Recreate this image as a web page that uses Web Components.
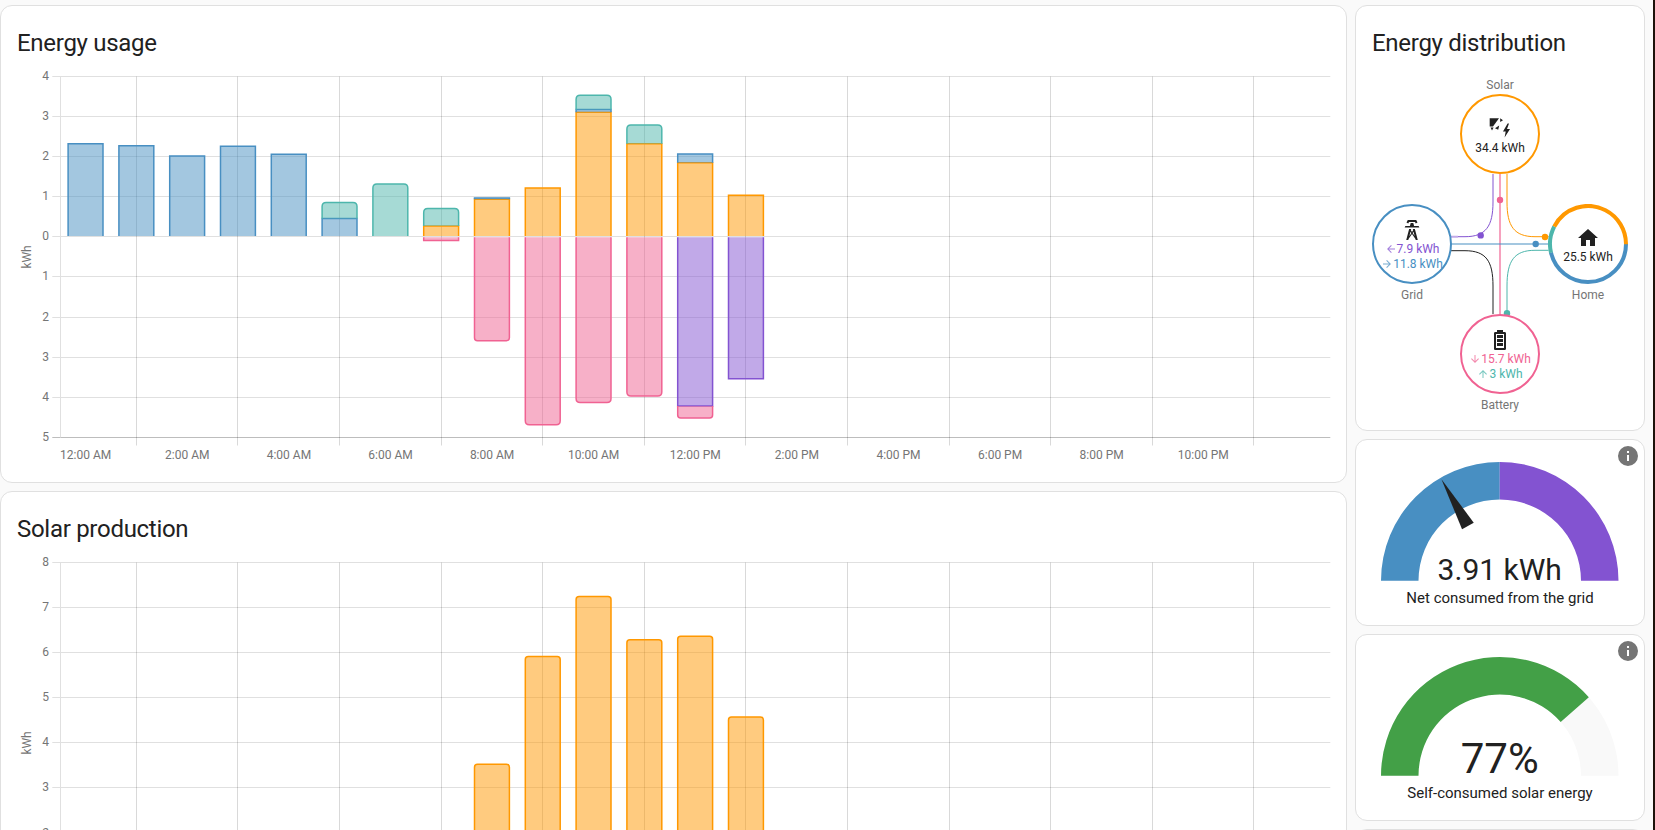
<!DOCTYPE html>
<html lang="en">
<head>
<meta charset="utf-8">
<title>Energy</title>
<style>
  html, body { margin: 0; height: 830px; overflow: hidden; background: #fafafa; }
  body { font-family: Roboto, "Liberation Sans", sans-serif; color: #212121; }
</style>
</head>
<body>
<energy-page>
  <energy-card slot="main" header="Energy usage" style="height:478px">
    <bar-chart id="usage"></bar-chart>
  </energy-card>
  <energy-card slot="main" header="Solar production" style="height:478px">
    <bar-chart id="solar"></bar-chart>
  </energy-card>

  <energy-card slot="side" header="Energy distribution" style="height:426px">
    <energy-distribution></energy-distribution>
  </energy-card>
  <energy-card slot="side" style="height:187px">
    <energy-gauge value="3.91 kWh" size="30" label="Net consumed from the grid" kind="net" text-y="-1"></energy-gauge>
  </energy-card>
  <energy-card slot="side" style="height:187px">
    <energy-gauge value="77%" size="42" label="Self-consumed solar energy" kind="ratio" ratio="0.77" text-y="-2.5"></energy-gauge>
  </energy-card>
  <energy-card slot="side" style="height:187px"></energy-card>
</energy-page>

<script>
const COLORS = {
  grid: '#488fc2',
  solar: '#ff9800',
  battery: '#4db6ac',
  toBattery: '#f06292',
  toGrid: '#8353d1',
};

const ICONS = {
  solar: `<path d="M1.7 2.2H11L5 10.5H1.7Z"/><path d="M12.2 2.3 15 4.2 12.2 6Z"/><path d="M2.5 11.6H5.6L4 14.6Z"/><path d="M7 12.3 11.2 9.5 10.2 13.7Z"/><path d="M19.6 7.6 15 15.6H17.7L16.6 21.6 22 13H19L21 7.6Z"/>`,
  grid: `<path d="M8.28,5.45L6.5,4.55L7.76,2H16.23L17.5,4.55L15.72,5.44L15,4H9L8.28,5.45M18.62,8H14.09L13.3,5H10.7L9.91,8H5.38L4.63,9.5H19.37L18.62,8M17.77,22H15.7L15.46,21.1L12,15.9L8.53,21.1L8.3,22H6.23L9.12,11H11.19L10.83,12.35L12,14.1L13.16,12.35L12.81,11H14.88L17.77,22M11.4,15L10.5,13.65L9.32,18.13L11.4,15M14.68,18.12L13.5,13.64L12.6,15L14.68,18.12Z"/>`,
  home: `<path d="M10,20V14H14V20H19V12H22L12,3L2,12H5V20H10Z"/>`,
  battery: `<path fill-rule="evenodd" d="M16.67,4H15V2H9V4H7.33A1.33,1.33 0 0,0 6,5.33V20.67C6,21.4 6.6,22 7.33,22H16.67A1.33,1.33 0 0,0 18,20.67V5.33C18,4.6 17.4,4 16.67,4M16,20H8V6H16Z"/><path d="M15,7H9V10H15ZM15,11H9V14H15ZM15,15H9V18H15Z"/>`,
  left: `<path d="M20,11V13H8L13.5,18.5L12.08,19.92L4.16,12L12.08,4.08L13.5,5.5L8,11H20Z"/>`,
  right: `<path d="M4,11V13H16L10.5,18.5L11.92,19.92L19.84,12L11.92,4.08L10.5,5.5L16,11H4Z"/>`,
  down: `<path d="M11,4H13V16L18.5,10.5L19.92,11.92L12,19.84L4.08,11.92L5.5,10.5L11,16V4Z"/>`,
  up: `<path d="M13,20H11V8L5.5,13.5L4.08,12.08L12,4.16L19.92,12.08L18.5,13.5L13,8V20Z"/>`,
  info: `<path d="M13,9H11V7H13M13,17H11V11H13M12,2A10,10 0 0,0 2,12A10,10 0 0,0 12,22A10,10 0 0,0 22,12A10,10 0 0,0 12,2Z"/>`,
};

class EnergyPage extends HTMLElement {
  constructor() {
    super();
    this.attachShadow({ mode: 'open' }).innerHTML = `
      <style>
        :host {
          display: grid;
          grid-template-columns: 1347px 290px;
          column-gap: 8px;
          align-items: start;
          box-sizing: border-box;
          width: 1655px;
          height: 830px;
          padding-top: 5px;
          border-right: 2px solid #1d120b;
          overflow: hidden;
        }
        .col { display: flex; flex-direction: column; gap: 8px; }
      </style>
      <div class="col"><slot name="main"></slot></div>
      <div class="col"><slot name="side"></slot></div>`;
  }
}

class EnergyCard extends HTMLElement {
  constructor() {
    super();
    const header = this.getAttribute('header');
    this.attachShadow({ mode: 'open' }).innerHTML = `
      <style>
        :host {
          display: block;
          position: relative;
          box-sizing: border-box;
          flex: none;
          background: #fff;
          border: 1px solid #e0e0e0;
          border-radius: 12px;
          overflow: hidden;
        }
        h1 {
          margin: 0;
          padding: 13px 16px 0;
          height: 47px;
          font: 400 24px/48px Roboto, "Liberation Sans", sans-serif;
          letter-spacing: -0.012em;
          color: #212121;
        }
      </style>
      ${header ? `<h1>${header}</h1>` : ''}
      <slot></slot>`;
  }
}

class BarChart extends HTMLElement {
  constructor() {
    super();
    this.attachShadow({ mode: 'open' });
  }

  // opts: { ticks, step, rows, visibleHeight }
  render(opts) {
    const x0 = 59.3;
    const band = 50.8;
    const top = 10.4;
    const count = 25;
    const barLeft = (i) => x0 + i * band + 7.8;
    const barWidth = 34.9;
    const crisp = (v) => Math.floor(v) + 0.5;
    const zeroY = crisp(top + opts.ticks.indexOf(0) * opts.step);
    const right = x0 + count * band;
    const bottom = crisp(top + (opts.ticks.length - 1) * opts.step);
    const visible = opts.visibleHeight || 416;

    let grid = '';
    opts.ticks.forEach((tick, i) => {
      const y = crisp(top + i * opts.step);
      const last = i === opts.ticks.length - 1;
      grid += `<path d="M${x0 - 8} ${y}H${right}" stroke="${last ? '#bdbdbd' : '#e0e0e0'}"/>`;
      if (y - 6 <= visible) {
        grid += `<text x="48" y="${y + 3.5}" text-anchor="end">${tick}</text>`;
      }
    });
    grid += `<path d="M${crisp(x0)} ${crisp(top)}V${bottom}" stroke="#e0e0e0"/>`;
    for (let i = 0; i < 12; i++) {
      const x = crisp(x0 - 0.2 + (1.5 + 2 * i) * band);
      grid += `<path d="M${x} ${crisp(top)}V${bottom + 8}" stroke="#000" stroke-opacity=".15"/>`;
    }
    if (bottom + 21 <= visible) {
      for (let i = 0; i < 12; i++) {
        const hour = i === 0 ? 12 : i * 2 > 12 ? i * 2 - 12 : i * 2;
        const suffix = i < 6 ? 'AM' : 'PM';
        const x = x0 + (2 * i + 0.5) * band;
        grid += `<text x="${x}" y="${bottom + 21}" text-anchor="middle">${hour}:00 ${suffix}</text>`;
      }
    }
    grid += `<text transform="translate(30 ${top + (bottom - top) / 2}) rotate(-90)" text-anchor="middle">kWh</text>`;

    const segment = (i, from, to, color, radius) => {
      const dir = to < from ? 1 : -1;
      const x = barLeft(i);
      const w = barWidth;
      const r = Math.min(radius, Math.abs(from - to));
      const d = r
        ? `M${x} ${from}V${to + dir * r}Q${x} ${to} ${x + r} ${to}H${x + w - r}Q${x + w} ${to} ${x + w} ${to + dir * r}V${from}`
        : `M${x} ${from}V${to}H${x + w}V${from}`;
      return `<path d="${d}Z" fill="${color}" fill-opacity=".5"/>`
        + `<path d="${d}" fill="none" stroke="${color}" stroke-width="1.5"/>`;
    };

    let bars = '';
    opts.rows.forEach((row, i) => {
      let up = zeroY;
      (row.up || []).forEach(([name, value, radius], n) => {
        const y = up - value * opts.step;
        bars += segment(i, n === 0 ? zeroY - 0.5 : up, y, COLORS[name], radius || 0);
        up = y;
      });
      let down = zeroY + 1.5;
      (row.down || []).forEach(([name, value, radius], n) => {
        const y = down + value * opts.step;
        bars += segment(i, n === 0 ? zeroY + 0.8 : down, y, COLORS[name], radius || 0);
        down = y;
      });
    });

    this.shadowRoot.innerHTML = `
      <style>
        :host { display: block; height: 416px; }
        svg { display: block; }
        text { font: 12px Roboto, "Liberation Sans", sans-serif; fill: #757575; }
      </style>
      <svg width="1345" height="416" viewBox="0 0 1345 416">${grid}${bars}</svg>`;
  }
}

class FlowValue extends HTMLElement {
  constructor() {
    super();
    const dir = this.getAttribute('dir-icon');
    const color = this.getAttribute('color') || '#212121';
    this.attachShadow({ mode: 'open' }).innerHTML = `
      <style>
        :host {
          display: flex;
          align-items: center;
          justify-content: center;
          height: 15px;
          font-size: 12px;
          line-height: 15px;
          white-space: nowrap;
          color: ${color};
        }
        svg { width: 12px; height: 12px; fill: currentColor; opacity: .75; flex: none; }
      </style>
      ${dir ? `<svg viewBox="0 0 24 24">${ICONS[dir]}</svg>` : ''}<slot></slot>`;
  }
}

class FlowNode extends HTMLElement {
  constructor() {
    super();
    const label = this.getAttribute('label');
    const icon = this.getAttribute('icon');
    const ring = this.getAttribute('ring') || '#212121';
    const below = this.hasAttribute('below');
    const home = this.hasAttribute('segments');
    const circumference = 2 * Math.PI * 38;
    // solar arc runs back over the top from 3 o'clock, grid runs forward, battery closes the ring
    const arc = (color, start, part) => `<circle cx="40" cy="40" r="38" fill="none" stroke="${color}" stroke-width="4"
      stroke-dasharray="${part * circumference} ${circumference}" transform="rotate(${start} 40 40)"/>`;
    const rings = home
      ? arc(COLORS.grid, 0, 0.463) + arc(COLORS.battery, 166.7, 0.113) + arc(COLORS.solar, 207.4, 0.424)
      : '';
    this.attachShadow({ mode: 'open' }).innerHTML = `
      <style>
        :host {
          display: flex;
          flex-direction: column;
          align-items: center;
          width: 80px;
          position: relative;
          z-index: 1;
        }
        .label { height: 16px; font-size: 12px; line-height: 16px; color: #757575; white-space: nowrap; }
        .label.top { margin-bottom: 1px; }
        .circle {
          box-sizing: border-box;
          position: relative;
          width: 80px;
          height: 80px;
          padding-top: ${home ? 2 : below ? 1 : 3}px;
          border-radius: 50%;
          border: ${home ? 0 : `2px solid ${ring}`};
          background: #fff;
          display: flex;
          flex-direction: column;
          align-items: center;
          justify-content: center;
        }
        .icon { width: 24px; height: 24px; fill: #212121; flex: none; }
        .ring { position: absolute; inset: 0; width: 80px; height: 80px; }
        .below { margin-top: 3px; }
      </style>
      ${below ? '' : `<div class="label top">${label}</div>`}
      <div class="circle">
        ${rings ? `<svg class="ring" viewBox="0 0 80 80">${rings}</svg>` : ''}
        <svg class="icon" viewBox="0 0 24 24">${ICONS[icon]}</svg>
        <slot></slot>
      </div>
      ${below ? `<div class="label below">${label}</div>` : ''}`;
  }
}

class EnergyDistribution extends HTMLElement {
  constructor() {
    super();
    const { grid, solar, battery, toBattery, toGrid } = COLORS;
    const straight = (d, color, opacity = 0.5) => `<path d="${d}" stroke="${color}" stroke-width="2" stroke-opacity="${opacity}"/>`;
    const curve = (d, color) => `<path d="${d}" stroke="${color}" stroke-width="1"/>`;
    const dot = (x, y, color) => `<circle cx="${x}" cy="${y}" r="3.2" fill="${color}"/>`;
    this.attachShadow({ mode: 'open' }).innerHTML = `
      <style>
        :host {
          display: block;
          position: relative;
          box-sizing: border-box;
          width: 256px;
          margin-left: 16px;
          padding-top: 11px;
        }
        .row { display: flex; justify-content: center; }
        .middle { justify-content: space-between; margin-top: 30px; }
        .bottom { margin-top: 11px; }
        svg.lines { position: absolute; left: 0; top: 0; width: 256px; height: 340px; fill: none; }
      </style>
      <svg class="lines" viewBox="0 0 256 340">
        ${straight('M128 108V248', toBattery, 0.6)}
        ${straight('M79 178H177', grid)}
        ${straight('M121 108V136', toGrid)}
        ${curve('M121 136C121 160 114 170.7 93 170.7H86', toGrid)}
        ${straight('M86 170.7H79', toGrid)}
        ${straight('M135 108V136', solar)}
        ${curve('M135 136C135 160 142 170.7 163 170.7H177', solar)}
        ${straight('M121 220V248', '#212121')}
        ${curve('M79 184.7H93C114 184.7 121 195 121 220', '#212121')}
        ${straight('M135 220V248', battery)}
        ${curve('M177 184.3H163C142 184.3 135 195 135 220', battery)}
        ${dot(128, 134, toBattery)}
        ${dot(108.7, 169.4, toGrid)}
        ${dot(173, 171, solar)}
        ${dot(163.7, 178, grid)}
        ${dot(135, 247.3, battery)}
      </svg>
      <div class="row">
        <flow-node label="Solar" icon="solar" ring="${solar}">
          <flow-value style="margin-top:1px">34.4 kWh</flow-value>
        </flow-node>
      </div>
      <div class="row middle">
        <flow-node label="Grid" icon="grid" ring="${grid}" below>
          <flow-value dir-icon="left" color="${toGrid}">7.9 kWh</flow-value>
          <flow-value dir-icon="right" color="${grid}">11.8 kWh</flow-value>
        </flow-node>
        <flow-node label="Home" icon="home" segments below>
          <flow-value>25.5 kWh</flow-value>
        </flow-node>
      </div>
      <div class="row bottom">
        <flow-node label="Battery" icon="battery" ring="${toBattery}" below>
          <flow-value dir-icon="down" color="${toBattery}">15.7 kWh</flow-value>
          <flow-value dir-icon="up" color="${battery}">3 kWh</flow-value>
        </flow-node>
      </div>`;
  }
}

class EnergyGauge extends HTMLElement {
  constructor() {
    super();
    const R = 118.75;
    const r = 81.25;
    const sector = (from, to, color) => {
      const pt = (rad, a) => `${-rad * Math.cos(a)} ${-rad * Math.sin(a)}`;
      const a0 = from * Math.PI;
      const a1 = to * Math.PI;
      return `<path fill="${color}" d="M${pt(R, a0)}A${R} ${R} 0 0 1 ${pt(R, a1)}L${pt(r, a1)}A${r} ${r} 0 0 0 ${pt(r, a0)}Z"/>`;
    };
    let arcs;
    if (this.getAttribute('kind') === 'net') {
      arcs = sector(0, 0.5, COLORS.grid) + sector(0.5, 1, COLORS.toGrid)
        + '<polygon points="-58.3,-101.5 -37.7,-51.5 -26,-58.1" fill="#212121"/>';
    } else {
      const ratio = Number(this.getAttribute('ratio'));
      arcs = sector(0, 1, '#f9f9f9') + sector(0, ratio, '#43a047');
    }
    this.attachShadow({ mode: 'open' }).innerHTML = `
      <style>
        :host { display: block; text-align: center; padding-top: 22px; color: #212121; }
        svg.gauge { display: block; margin: 0 auto; overflow: visible; }
        text { font: 400 ${this.getAttribute('size')}px Roboto, "Liberation Sans", sans-serif; fill: #212121; }
        .label { margin-top: 7px; font-size: 15px; line-height: 20px; }
        .info { position: absolute; top: 4px; right: 4px; width: 24px; height: 24px; fill: #757575; }
      </style>
      <svg class="info" viewBox="0 0 24 24">${ICONS.info}</svg>
      <svg class="gauge" width="237.5" height="118.75" viewBox="-118.75 -118.75 237.5 118.75">
        ${arcs}
        <text x="0" y="${this.getAttribute('text-y')}" text-anchor="middle">${this.getAttribute('value')}</text>
      </svg>
      <div class="label">${this.getAttribute('label')}</div>`;
  }
}

customElements.define('energy-page', EnergyPage);
customElements.define('energy-card', EnergyCard);
customElements.define('bar-chart', BarChart);
customElements.define('flow-value', FlowValue);
customElements.define('flow-node', FlowNode);
customElements.define('energy-distribution', EnergyDistribution);
customElements.define('energy-gauge', EnergyGauge);

const g = (v) => ['grid', v];
const usageRows = [
  { up: [g(2.31)] },
  { up: [g(2.26)] },
  { up: [g(2.01)] },
  { up: [g(2.25)] },
  { up: [g(2.05)] },
  { up: [g(0.45), ['battery', 0.4, 4]] },
  { up: [['battery', 1.31, 4]] },
  { up: [['solar', 0.26], ['battery', 0.44, 4]], down: [['toBattery', 0.06]] },
  { up: [['solar', 0.93], g(0.03)], down: [['toBattery', 2.56, 3]] },
  { up: [['solar', 1.21]], down: [['toBattery', 4.66, 4]] },
  { up: [['solar', 3.1], g(0.07), ['battery', 0.35, 4]], down: [['toBattery', 4.1, 4]] },
  { up: [['solar', 2.31], ['battery', 0.47, 4]], down: [['toBattery', 3.94, 4]] },
  { up: [['solar', 1.84], g(0.22)], down: [['toGrid', 4.19], ['toBattery', 0.3, 3]] },
  { up: [['solar', 1.03]], down: [['toGrid', 3.51]] },
];
const solarRow = (v) => ({ up: [['solar', v, 3]] });
const solarRows = [
  {}, {}, {}, {}, {}, {}, {}, {},
  solarRow(3.53), solarRow(5.92), solarRow(7.25), solarRow(6.29), solarRow(6.37), solarRow(4.58),
];

document.getElementById('usage').render({ ticks: [4, 3, 2, 1, 0, 1, 2, 3, 4, 5], step: 40.1, rows: usageRows });
document.getElementById('solar').render({ ticks: [8, 7, 6, 5, 4, 3, 2, 1, 0], step: 45.1, rows: solarRows, visibleHeight: 278 });
</script>
</body>
</html>
